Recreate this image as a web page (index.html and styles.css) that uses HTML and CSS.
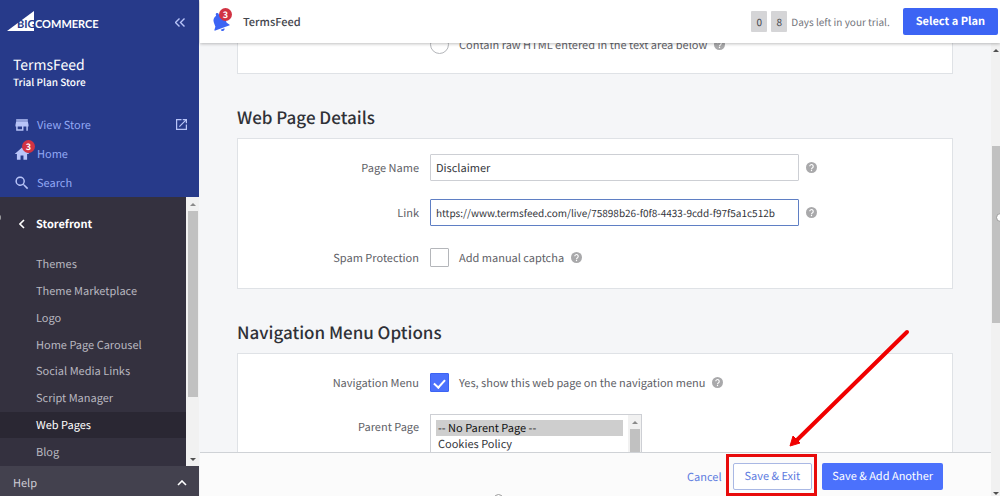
FILE: index.html
```
<!DOCTYPE html>
<html lang="en">

<head>
    <meta charset="UTF-8">
    <meta name="viewport" content="width=device-width, initial-scale=1.0">
    <title>Web Pages - TermsFeed</title>
    <link rel="stylesheet" href="styles.css">
</head>

<body>
    <!-- shared icons -->
    <svg class="sprite" aria-hidden="true">
        <symbol id="help" viewBox="0 0 24 24">
            <circle cx="12" cy="12" r="12" fill="#a9a9ab" />
            <path d="M8.200 9.500a3.800 3.800 0 1 1 6 3c-1.500 1-2.200 1.600-2.200 3.200" fill="none" stroke="#fff" stroke-width="2.400" />
            <circle cx="12" cy="18.500" r="1.500" fill="#fff" />
        </symbol>
    </svg>

    <aside class="sidebar">
        <div class="store">
            <div class="brand">
                <svg class="logo" viewBox="0 0 94 22" role="img" aria-label="BigCommerce">
                    <path d="M0 21L27 1V21Z" fill="#fff" />
                    <text x="10" y="18" class="logo-big">BIG</text>
                    <text x="28" y="18" class="logo-commerce">COMMERCE</text>
                </svg>
                <button class="icon-btn" aria-label="Collapse menu">
                    <svg width="12" height="12" viewBox="0 0 12 12"><path d="M4.500 3.500L0.500 7.500L4.500 11.500M9.500 3.500L5.500 7.500L9.500 11.500" fill="none" stroke="#b8c4f8" stroke-width="1.400" /></svg>
                </button>
            </div>
            <div class="store-name">TermsFeed</div>
            <div class="store-plan">Trial Plan Store</div>
            <nav class="quick-nav">
                <a href="#">
                    <svg width="16" height="16" viewBox="1 1 22 22"><path d="M20 4H4v2h16V4zm1 10v-2l-1-5H4l-1 5v2h1v6h10v-6h4v6h2v-6h1zm-9 4H6v-4h6v4z" fill="#b8c4f8" /></svg>
                    <span>View Store</span>
                    <svg class="external" width="11" height="11" viewBox="3 3 18 18"><path d="M19 19H5V5h7V3H3v18h18v-9h-2v7zM14 3v2h3.600l-9.800 9.800 1.400 1.400L19 6.400V10h2V3h-7z" fill="#b8c4f8" /></svg>
                </a>
                <a href="#">
                    <svg width="16" height="16" viewBox="1 1 22 22"><path d="M10 20v-6h4v6h5v-8h3L12 3 2 12h3v8z" fill="#b8c4f8" /></svg>
                    <span>Home</span>
                    <b class="badge home-badge">3</b>
                </a>
                <a href="#">
                    <svg width="16" height="16" viewBox="1 1 22 22"><path d="M15.500 14h-.8l-.3-.3A6.500 6.500 0 1 0 13.700 14.400l.3.300v.8l5 5 1.500-1.500-5-5zm-6 0a4.500 4.500 0 1 1 0-9 4.500 4.500 0 0 1 0 9z" fill="#b8c4f8" /></svg>
                    <span>Search</span>
                </a>
            </nav>
        </div>

        <div class="section">
            <div class="section-body">
                <button class="section-title">
                    <svg width="6" height="10" viewBox="0 0 6 10"><path d="M5 1L1 5L5 9" fill="none" stroke="#fff" stroke-width="1.600" /></svg>
                    Storefront
                </button>
                <nav class="section-nav">
                    <a href="#">Themes</a>
                    <a href="#">Theme Marketplace</a>
                    <a href="#">Logo</a>
                    <a href="#">Home Page Carousel</a>
                    <a href="#">Social Media Links</a>
                    <a href="#">Script Manager</a>
                    <a href="#" class="active">Web Pages</a>
                    <a href="#">Blog</a>
                </nav>
            </div>
            <div class="scrollbar side-scroll">
                <i class="arrow up"></i>
                <i class="thumb"></i>
                <i class="arrow down dark"></i>
            </div>
        </div>

        <button class="help-bar">
            Help
            <svg width="10" height="6" viewBox="0 0 10 6"><path d="M1 5L5 1L9 5" fill="none" stroke="#fff" stroke-width="1.600" /></svg>
        </button>
    </aside>

    <div class="main">
        <header class="topbar">
            <button class="icon-btn bell" aria-label="Notifications">
                <svg width="20" height="22" viewBox="0 0 20 22">
                    <g transform="rotate(-20 9 11)" fill="#3c64f4">
                        <path d="M9 1.500c.9 0 1.500.6 1.500 1.500v.7c3 .8 4.500 3 4.500 6v4.300l2 2.500v1H1v-1l2-2.500V9.700c0-3 1.500-5.200 4.500-6V3c0-.9.600-1.500 1.500-1.500z" />
                        <path d="M7 18.500h4a2 2 0 0 1-4 0z" />
                    </g>
                </svg>
                <b class="badge">3</b>
            </button>
            <span class="topbar-name">TermsFeed</span>
            <div class="trial">
                <span class="digit">0</span>
                <span class="digit">8</span>
                Days left in your trial.
            </div>
            <button class="btn primary plan">Select a Plan</button>
        </header>

        <div class="workspace">
            <div class="page">
                <form class="content">
                    <div class="card first">
                        <div class="row">
                            <span class="label"></span>
                            <input type="radio" id="raw" name="type">
                            <label for="raw" class="choice">Contain raw HTML entered in the text area below</label>
                            <svg class="help"><use href="#help" /></svg>
                        </div>
                    </div>

                    <h2>Web Page Details</h2>
                    <div class="card">
                        <div class="row">
                            <label for="name" class="label">Page Name</label>
                            <input type="text" id="name" value="Disclaimer">
                            <svg class="help"><use href="#help" /></svg>
                        </div>
                        <div class="row">
                            <label for="link" class="label">Link</label>
                            <input type="text" id="link" class="focused" value="https://www.termsfeed.com/live/75898b26-f0f8-4433-9cdd-f97f5a1c512b">
                            <svg class="help"><use href="#help" /></svg>
                        </div>
                        <div class="row">
                            <span class="label">Spam Protection</span>
                            <input type="checkbox" id="captcha">
                            <label for="captcha" class="choice">Add manual captcha</label>
                            <svg class="help"><use href="#help" /></svg>
                        </div>
                    </div>

                    <h2>Navigation Menu Options</h2>
                    <div class="card">
                        <div class="row">
                            <span class="label">Navigation Menu</span>
                            <input type="checkbox" id="menu" checked>
                            <label for="menu" class="choice">Yes, show this web page on the navigation menu</label>
                            <svg class="help"><use href="#help" /></svg>
                        </div>
                        <div class="row tall">
                            <label for="parent" class="label">Parent Page</label>
                            <div class="listbox">
                                <select id="parent" multiple size="6">
                                    <option selected>-- No Parent Page --</option>
                                    <option>Cookies Policy</option>
                                </select>
                                <div class="scrollbar">
                                    <i class="arrow up"></i>
                                    <i class="thumb"></i>
                                </div>
                            </div>
                        </div>
                    </div>
                </form>

                <footer class="actions">
                    <a href="#" class="cancel">Cancel</a>
                    <div class="callout">
                        <button class="btn outline">Save &amp; Exit</button>
                        <svg class="pointer" width="122" height="118" viewBox="0 0 122 118">
                            <path d="M118 3L8 111" stroke="#f00000" stroke-width="4" stroke-linecap="round" />
                            <path d="M1 117L4 107L11 114Z" fill="#f00000" stroke="#f00000" stroke-linejoin="round" />
                        </svg>
                    </div>
                    <button class="btn primary save">Save &amp; Add Another</button>
                </footer>
            </div>
            <div class="scrollbar page-scroll">
                <i class="arrow up dark"></i>
                <i class="thumb"></i>
                <i class="arrow down dark"></i>
            </div>
        </div>
    </div>

    <!-- resize handles on the window edges -->
    <i class="handle left"></i>
    <i class="handle right"></i>
    <i class="handle bottom"></i>
</body>

</html>
```
FILE: styles.css
```
* {
    box-sizing: border-box;
}

body {
    position: relative;
    display: flex;
    height: 100vh;
    margin: 0;
    overflow: hidden;
    font-family: "Noto Sans CJK SC", "Noto Sans", sans-serif;
    font-size: 11px;
    line-height: 18px;
    text-rendering: geometricPrecision;
    color: #5e6066;
    background: #f5f6f8;
}

button,
input,
select {
    margin: 0;
    font: inherit;
    color: inherit;
    text-rendering: inherit;
}

button {
    padding: 0;
    border: none;
    background: none;
    cursor: pointer;
}

a {
    text-decoration: none;
}

svg {
    display: block;
    flex: none;
}

.sprite {
    position: absolute;
    width: 0;
    height: 0;
}

/* Sidebar */

.sidebar {
    display: flex;
    flex-direction: column;
    flex: none;
    width: 199px;
    background: #34313f;
}

.store {
    flex: none;
    height: 197px;
    padding: 10px 12px 0 7px;
    background: #273a8a;
}

.brand {
    display: flex;
    align-items: center;
    justify-content: space-between;
    height: 22px;
}

.logo {
    width: 94px;
    height: 22px;
}

.logo text {
    font-family: Lato, sans-serif;
    font-size: 11px;
    font-weight: 700;
}

.logo-big {
    fill: #273a8a;
}

.logo-commerce {
    fill: #fff;
}

.store-name {
    margin-top: 22px;
    padding-left: 6px;
    font-size: 14px;
    line-height: 22px;
    color: #fff;
}

.store-plan {
    padding-left: 6px;
    font-size: 10px;
    line-height: 12px;
    font-weight: 500;
    color: #fff;
}

.quick-nav {
    margin-top: 22px;
}

.quick-nav a {
    position: relative;
    display: flex;
    align-items: center;
    gap: 7px;
    height: 29px;
    padding-left: 7px;
    color: #93a9f5;
}

.quick-nav .external {
    margin-left: auto;
}

.badge {
    position: absolute;
    width: 13px;
    height: 13px;
    border-radius: 50%;
    font-size: 9px;
    line-height: 13px;
    text-align: center;
    color: #fff;
    background: #d13343;
}

.home-badge {
    left: 15px;
    top: 1px;
}

.section {
    display: flex;
    flex: 1;
    min-height: 0;
}

.section-body {
    display: flex;
    flex-direction: column;
    flex: 1;
    padding-bottom: 1px;
}

.section-title {
    display: flex;
    align-items: center;
    gap: 11px;
    height: 54px;
    padding-left: 19px;
    font-weight: 700;
    color: #fff;
}

.section-nav {
    display: grid;
    flex: 1;
    grid-auto-rows: 1fr;
}

.section-nav a {
    display: flex;
    align-items: center;
    padding-left: 36px;
    color: #b9b8c0;
}

.section-nav .active {
    color: #fff;
    background: #2a2733;
}

.help-bar {
    display: flex;
    align-items: center;
    justify-content: space-between;
    flex: none;
    height: 30px;
    padding: 4px 12px 0 13px;
    color: #cfced6;
    background: #43414e;
}

/* Scrollbars */

.scrollbar {
    display: flex;
    flex-direction: column;
    align-items: center;
    flex: none;
    width: 13px;
    background: #f1f1f1;
}

.arrow {
    border: 3px solid transparent;
}

.arrow.up {
    margin: 6px 0 5px;
    border-top: none;
    border-bottom-color: #8a8a8a;
}

.arrow.down {
    margin: auto 0 5px;
    border-bottom: none;
    border-top-color: #505050;
}

.arrow.up.dark {
    border-bottom-color: #505050;
}

.thumb {
    width: 10px;
    height: 80px;
    background: #c1c1c1;
}

.side-scroll .thumb {
    height: 69%;
}

.page-scroll {
    width: 9px;
}

.page-scroll .arrow.up {
    margin-bottom: 94px;
}

.page-scroll .arrow.down {
    margin-bottom: 1px;
}

.page-scroll .thumb {
    width: 8px;
    height: 39%;
}

/* Top bar */

.main {
    display: flex;
    flex-direction: column;
    flex: 1;
    min-width: 0;
    padding-left: 1px;
}

.topbar {
    position: relative;
    z-index: 1;
    display: flex;
    align-items: center;
    flex: none;
    height: 43px;
    padding: 0 2px 0 11px;
    background: #fff;
    box-shadow: 0 1px 3px rgba(0, 0, 0, 0.25);
}

.bell {
    position: relative;
}

.bell .badge {
    left: 8px;
    top: -3px;
}

.topbar-name {
    margin-left: 12px;
    font-weight: 500;
    color: #44464d;
}

.trial {
    display: flex;
    align-items: center;
    gap: 4px;
    margin-left: auto;
    font-size: 10px;
    color: #73757c;
}

.digit {
    width: 16px;
    line-height: 21px;
    border-radius: 1px;
    text-align: center;
    color: #44464d;
    background: #d5d5d7;
}

.btn {
    height: 27px;
    border-radius: 2px;
    line-height: 25px;
    white-space: nowrap;
}

.primary {
    color: #fff;
    background: #4b71fc;
}

.plan {
    margin-left: 13px;
    padding: 0 13px;
    font-weight: 700;
    background: #3c64f4;
}

/* Form */

.workspace {
    display: flex;
    flex: 1;
    min-height: 0;
}

.page {
    display: flex;
    flex-direction: column;
    flex: 1;
    min-width: 0;
}

.content {
    flex: 1;
    min-height: 0;
    padding: 0 38px 0 37px;
    overflow: hidden;
}

h2 {
    margin: 0;
    padding: 29px 0 7px;
    font-size: 17px;
    line-height: 28px;
    font-weight: 500;
    color: #2f3137;
}

.card {
    display: flex;
    flex-direction: column;
    gap: 18px;
    padding: 15px 0 17px;
    border: 1px solid #dfe2e6;
    background: #fff;
}

/* scrolled partly under the top bar */
.card.first {
    margin-top: -28px;
    padding-bottom: 15px;
}

.row {
    display: flex;
    align-items: center;
    height: 27px;
}

.row.tall {
    align-items: flex-start;
    height: auto;
}

.label {
    flex: none;
    width: 181px;
    margin-right: 11px;
    text-align: right;
}

.tall .label {
    line-height: 27px;
}

input[type="text"] {
    flex: 1;
    min-width: 0;
    max-width: 369px;
    height: 27px;
    padding: 0 0 0 5px;
    border: 1px solid #cdcfd4;
    border-radius: 1px;
    outline: none;
    color: #33353b;
    background: #fff;
}

input.focused {
    border-color: #5f7fc4;
    font-size: 10px;
}

input[type="radio"],
input[type="checkbox"] {
    flex: none;
    width: 19px;
    height: 19px;
    border: 1px solid #b4b6ba;
    border-radius: 1px;
    appearance: none;
    background: #fff;
}

input[type="radio"] {
    border-radius: 50%;
}

input[type="checkbox"]:checked {
    border-color: #3c64f4;
    background: #4b71fc;
}

input[type="checkbox"]:checked::before {
    content: "";
    display: block;
    width: 5px;
    height: 9px;
    margin: 3px auto;
    border: solid #fff;
    border-width: 0 2px 2px 0;
    transform: rotate(42deg);
}

.choice {
    margin-left: 10px;
}

.help {
    width: 11px;
    height: 11px;
    margin-left: 7px;
}

.listbox {
    display: flex;
    width: 212px;
    height: 84px;
    border: 1px solid #cdcfd4;
}

.listbox select {
    flex: 1;
    padding: 5px;
    border: none;
    outline: none;
    overflow: hidden;
    color: #33353b;
    background: #fff;
}

.listbox option {
    padding: 0 2px;
}

/* Bottom bar */

.actions {
    position: relative;
    display: flex;
    align-items: center;
    justify-content: flex-end;
    flex: none;
    height: 44px;
    padding: 4px 48px 0 0;
    border-top: 1px solid #cfd2d6;
    background: #fbfbfb;
}

.cancel {
    color: #5d7be0;
}

.callout {
    position: relative;
    margin: 0 10px 0 11px;
}

.callout::before {
    content: "";
    position: absolute;
    inset: -9px -5px -6px -7px;
    border: 3px solid #e80b0b;
}

.pointer {
    position: absolute;
    left: 56px;
    bottom: 43px;
}

.outline {
    position: relative;
    padding: 0 11px;
    border: 1px solid #a9b8e4;
    color: #5d7be0;
    background: #fff;
}

.save {
    padding: 0 10px;
}

.handle {
    position: absolute;
    width: 9px;
    height: 9px;
    border: 1px solid #999;
    border-radius: 50%;
    background: #fff;
}

.handle.left {
    top: 213px;
    left: -8px;
}

.handle.right {
    top: 213px;
    right: -5px;
}

.handle.bottom {
    bottom: -7px;
    left: 494px;
}
```
